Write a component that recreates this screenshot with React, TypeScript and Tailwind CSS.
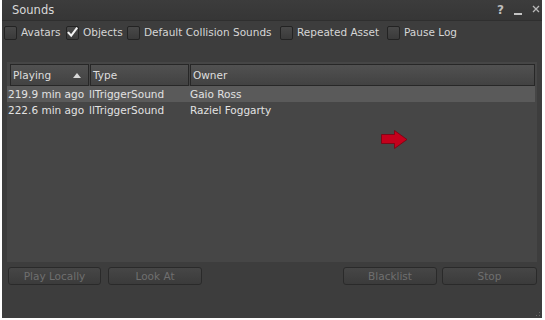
import React from 'react'

const rows = [
  { playing: '219.9 min ago', type: 'llTriggerSound', owner: 'Gaio Ross', selected: true },
  { playing: '222.6 min ago', type: 'llTriggerSound', owner: 'Raziel Foggarty', selected: false },
]

const filters = [
  { label: 'Avatars', checked: false, w: 'w-[62px]' },
  { label: 'Objects', checked: true, w: 'w-[61px]' },
  { label: 'Default Collision Sounds', checked: false, w: 'w-[153px]' },
  { label: 'Repeated Asset', checked: false, w: 'w-[107px]' },
  { label: 'Pause Log', checked: false, w: 'w-[80px]' },
]

function Checkbox({ checked }: { checked: boolean }) {
  return (
    <span className="relative flex h-[14px] w-[13px] shrink-0 items-center justify-center rounded-[2px] border border-[#232323] bg-gradient-to-b from-[#494949] to-[#3a3a3a]">
      {checked && (
        <svg width="11" height="11" viewBox="0 0 11 11" className="absolute">
          <path d="M1.5 5.8 L4.2 8.6 L9.6 1.4" fill="none" stroke="#f2f2f2" strokeWidth="2" strokeLinecap="square" />
        </svg>
      )}
    </span>
  )
}

function Button({ label, w }: { label: string; w: string }) {
  return (
    <button className={`${w} h-[18px] rounded-[3px] border border-[#2a2a2a] bg-gradient-to-b from-[#464646] to-[#3b3b3b] text-[10.5px] leading-none text-[#6f6f6f]`}>
      {label}
    </button>
  )
}

export default function App() {
  return (
    <div className="h-[320px] w-[545px] bg-white pl-[2px]" style={{ fontFamily: '"DejaVu Sans", sans-serif' }}>
      <div className="relative flex h-[318px] w-[540px] flex-col bg-[#3d3d3d]">
        {/* title bar */}
        <div className="flex h-[21px] items-center border-b border-[#2f2f2f] bg-gradient-to-b from-[#3c3c3c] to-[#363636] pl-[10px] pr-[2px]">
          <span className="mt-[1px] text-[11.5px] text-[#d8d8d8]">Sounds</span>
          <div className="ml-auto flex items-center text-[#bdbdbd]">
            <span className="mr-[10px] text-[12px] font-bold leading-none">?</span>
            <span className="mr-[10px] mt-[7px] h-[2px] w-[8px] bg-[#c4c4c4]" />
            <svg width="8" height="8" viewBox="0 0 8 8" className="mb-[3px]">
              <path d="M1 1 L7 7 M7 1 L1 7" stroke="#b8b8b8" strokeWidth="1.3" />
            </svg>
          </div>
        </div>

        {/* filters */}
        <div className="mt-[4px] flex h-[15px] items-center pl-[2px]">
          {filters.map((f) => (
            <label key={f.label} className={`${f.w} flex shrink-0 items-center gap-[4px]`}>
              <Checkbox checked={f.checked} />
              <span className="whitespace-nowrap text-[10.5px] text-[#d6d6d6]">{f.label}</span>
            </label>
          ))}
        </div>

        {/* list */}
        <div className="ml-[5px] mt-[22px] h-[200px] w-[530px] bg-[#464646] pt-[2px]">
          <div className="ml-[3px] flex h-[22px] w-[525px] text-[10.5px] text-[#dedede]">
            <div className="flex w-[79px] items-center border border-[#272727] bg-gradient-to-b from-[#515151] to-[#424242] pl-[2px] pt-[1px]">
              Playing
              <svg width="8" height="5" viewBox="0 0 8 5" className="ml-auto mr-[7px]">
                <path d="M0 5 L4 0 L8 5 Z" fill="#d8d8d8" />
              </svg>
            </div>
            <div className="ml-[1px] flex w-[99px] items-center border border-[#272727] bg-gradient-to-b from-[#515151] to-[#424242] pl-[2px] pt-[1px]">
              Type
            </div>
            <div className="ml-[1px] flex flex-1 items-center border border-[#272727] bg-gradient-to-b from-[#515151] to-[#424242] pl-[2px] pt-[1px]">
              Owner
            </div>
          </div>
          {rows.map((r) => (
            <div
              key={r.playing}
              className={`flex h-[16px] w-[528px] items-center pt-[2px] text-[10.5px] text-[#e2e2e2] ${r.selected ? 'bg-[#5a5a5a]' : ''}`}
            >
              <span className="w-[82px] whitespace-nowrap pl-[1px]">{r.playing}</span>
              <span className="w-[101px] whitespace-nowrap">{r.type}</span>
              <span className="whitespace-nowrap">{r.owner}</span>
            </div>
          ))}
          <div className="ml-[374px] mt-[12px]">
            <svg width="27" height="19" viewBox="0 0 27 19">
              <path d="M0.5 4.5 H13.5 V0.5 L26 9.5 L13.5 18.5 V13.5 H0.5 Z" fill="#c4001c" stroke="#7a0010" strokeWidth="0.8" />
            </svg>
          </div>
        </div>

        {/* buttons */}
        <div className="mt-[5px] flex pl-[6px]">
          <Button label="Play Locally" w="w-[93px]" />
          <div className="w-[7px]" />
          <Button label="Look At" w="w-[94px]" />
          <div className="ml-auto" />
          <Button label="Blacklist" w="w-[94px]" />
          <div className="w-[5px]" />
          <Button label="Stop" w="w-[95px]" />
          <div className="w-[5px]" />
        </div>

        {/* resize grip */}
        <svg width="5" height="5" viewBox="0 0 5 5" className="absolute bottom-[1px] right-[1px]">
          <rect x="3" y="0" width="1" height="1" fill="#6a6a6a" />
          <rect x="0" y="3" width="1" height="1" fill="#6a6a6a" />
          <rect x="3" y="3" width="1" height="1" fill="#6a6a6a" />
        </svg>
      </div>
    </div>
  )
}
